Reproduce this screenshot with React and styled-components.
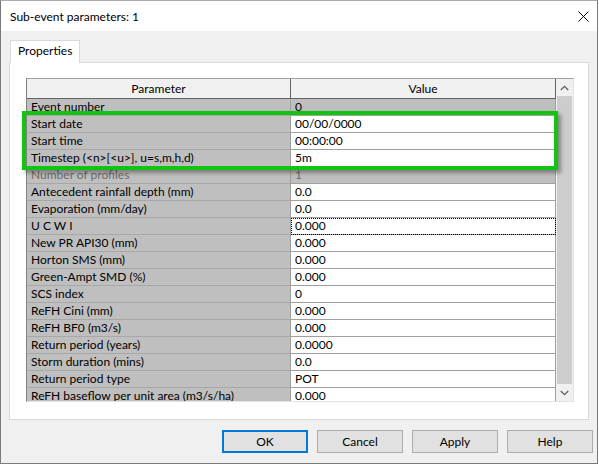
import React from "react";
import styled, { createGlobalStyle } from "styled-components";

const GlobalStyle = createGlobalStyle`
  html, body {
    margin: 0;
    padding: 0;
    background: #ffffff;
  }
  * {
    box-sizing: border-box;
  }
  body {
    font-family: Lato, "Noto Sans", "Liberation Sans", sans-serif;
    font-size: 12px;
    color: #000;
  }
`;

const rows = [
  { label: "Event number", value: "0", readOnly: true },
  { label: "Start date", value: "00/00/0000" },
  { label: "Start time", value: "00:00:00" },
  { label: "Timestep (<n>[<u>], u=s,m,h,d)", value: "5m" },
  { label: "Number of profiles", value: "1", readOnly: true, dim: true },
  { label: "Antecedent rainfall depth (mm)", value: "0.0" },
  { label: "Evaporation (mm/day)", value: "0.0" },
  { label: "U C W I", value: "0.000", focus: true },
  { label: "New PR API30 (mm)", value: "0.000" },
  { label: "Horton SMS (mm)", value: "0.000" },
  { label: "Green-Ampt SMD (%)", value: "0.000" },
  { label: "SCS index", value: "0" },
  { label: "ReFH Cini (mm)", value: "0.000" },
  { label: "ReFH BF0 (m3/s)", value: "0.000" },
  { label: "Return period (years)", value: "0.0000" },
  { label: "Storm duration (mins)", value: "0.0" },
  { label: "Return period type", value: "POT" },
  { label: "ReFH baseflow per unit area (m3/s/ha)", value: "0.000" },
];

const App = () => {
  return (
    <>
      <GlobalStyle />
      <Window>
        <TitleBar>
          <Title>Sub-event parameters: 1</Title>
          <CloseBtn>
            <svg width="11" height="11" viewBox="0 0 11 11">
              <path d="M0.5 0.5 L10.5 10.5 M10.5 0.5 L0.5 10.5" stroke="#000" strokeWidth="1" />
            </svg>
          </CloseBtn>
        </TitleBar>

        <Body>
          <TabStrip>
            <Tab>Properties</Tab>
          </TabStrip>
          <TabPanel>
            <GridFrame>
              <Table>
                <HeaderRow>
                  <HeadCell>Parameter</HeadCell>
                  <HeadCell>Value</HeadCell>
                </HeaderRow>
                {rows.map((r) => (
                  <Row key={r.label}>
                    <LabelCell $dim={r.dim}>{r.label}</LabelCell>
                    <ValueCell $readOnly={r.readOnly} $dim={r.dim} $focus={r.focus}>
                      {r.value}
                    </ValueCell>
                  </Row>
                ))}
              </Table>
              <ScrollBar>
                <ScrollArrow>
                  <svg width="9" height="6" viewBox="0 0 9 6">
                    <path d="M0.8 5 L4.5 1.3 L8.2 5" stroke="#606060" strokeWidth="1.3" fill="none" />
                  </svg>
                </ScrollArrow>
                <Thumb />
                <ScrollArrow>
                  <svg width="9" height="6" viewBox="0 0 9 6">
                    <path d="M0.8 1 L4.5 4.7 L8.2 1" stroke="#606060" strokeWidth="1.3" fill="none" />
                  </svg>
                </ScrollArrow>
              </ScrollBar>
              <Highlight />
            </GridFrame>
          </TabPanel>
          <ButtonRow>
            <Button $primary>OK</Button>
            <Button>Cancel</Button>
            <Button>Apply</Button>
            <Button>Help</Button>
          </ButtonRow>
        </Body>
      </Window>
    </>
  );
};

export default App;

const Window = styled.div`
  width: 598px;
  height: 464px;
  border: 1px solid #7a7a7a;
  border-top-color: #aaaaaa;
  background: #f0f0f0;
  display: flex;
  flex-direction: column;
`;

const TitleBar = styled.div`
  height: 30px;
  background: #ffffff;
  display: flex;
  align-items: center;
  justify-content: space-between;
  padding: 0 8px 0 9px;
`;

const Title = styled.div`
  font-size: 12px;
  color: #000;
  padding-top: 1px;
`;

const CloseBtn = styled.div`
  width: 11px;
  height: 11px;
  display: flex;
  margin-top: 1px;
`;

const Body = styled.div`
  flex: 1;
  display: flex;
  flex-direction: column;
  padding: 9px 8px 0 8px;
`;

const TabStrip = styled.div`
  display: flex;
  height: 22px;
  padding-left: 1px;
`;

const Tab = styled.div`
  background: #ffffff;
  border: 1px solid #d9d9d9;
  border-bottom: none;
  height: 23px;
  padding: 1px 7px 0 7px;
  position: relative;
  z-index: 1;
  line-height: 18px;
`;

const TabPanel = styled.div`
  height: 358px;
  background: #ffffff;
  border: 1px solid #d9d9d9;
  padding: 15px 0 0 16px;
`;

const GridFrame = styled.div`
  position: relative;
  width: 548px;
  height: 324px;
  display: flex;
  border-top: 1px solid #a0a0a0;
  border-left: 1px solid #828282;
  border-bottom: 1px solid #e3e3e3;
  border-right: 1px solid #e3e3e3;
`;

const Table = styled.div`
  width: 529px;
  overflow: hidden;
  display: flex;
  flex-direction: column;
`;

const HeaderRow = styled.div`
  display: grid;
  grid-template-columns: 264px 265px;
  height: 20px;
  flex-shrink: 0;
  background: #f0f0f0;
  border-bottom: 1px solid #646464;
`;

const HeadCell = styled.div`
  display: flex;
  align-items: center;
  justify-content: center;
  border-right: 1px solid #646464;
  color: #000;
`;

const Row = styled.div`
  display: grid;
  grid-template-columns: 264px 265px;
  height: 17px;
  flex-shrink: 0;
`;

const LabelCell = styled.div`
  background: #bfbfbf;
  border-bottom: 1px solid #a8a8a8;
  border-right: 1px solid #a0a0a0;
  padding-left: 4px;
  line-height: 16px;
  white-space: nowrap;
  color: ${(p) => (p.$dim ? "#6d6d6d" : "#000")};
`;

const ValueCell = styled.div`
  background: ${(p) => (p.$readOnly ? "#bfbfbf" : "#ffffff")};
  border-bottom: 1px solid #a0a0a0;
  border-right: 1px solid #a0a0a0;
  padding-left: 4px;
  line-height: 16px;
  white-space: nowrap;
  color: ${(p) => (p.$dim ? "#6d6d6d" : "#000")};
  outline: ${(p) => (p.$focus ? "1px dotted #000" : "none")};
  outline-offset: -1px;
`;

const ScrollBar = styled.div`
  width: 17px;
  background: #f0f0f0;
  display: flex;
  flex-direction: column;
`;

const ScrollArrow = styled.div`
  height: 17px;
  display: flex;
  align-items: center;
  justify-content: center;
  flex-shrink: 0;
`;

const Thumb = styled.div`
  flex: 1;
  margin: 0 1px;
  background: #cdcdcd;
`;

const Highlight = styled.div`
  position: absolute;
  left: -5px;
  top: 32px;
  width: 536px;
  height: 59px;
  border: 4px solid #12c312;
  box-shadow: 3px 3px 4px rgba(0, 0, 0, 0.35);
  pointer-events: none;
`;

const ButtonRow = styled.div`
  display: flex;
  justify-content: flex-end;
  gap: 9px;
  padding: 10px 0 0 0;
  margin-right: -4px;
`;

const Button = styled.button`
  width: 86px;
  height: 23px;
  font-family: Lato, "Noto Sans", "Liberation Sans", sans-serif;
  font-size: 12px;
  color: #000;
  background: #e1e1e1;
  border: ${(p) => (p.$primary ? "2px solid #0078d7" : "1px solid #adadad")};
  padding: 0;
  margin: 0;
`;
